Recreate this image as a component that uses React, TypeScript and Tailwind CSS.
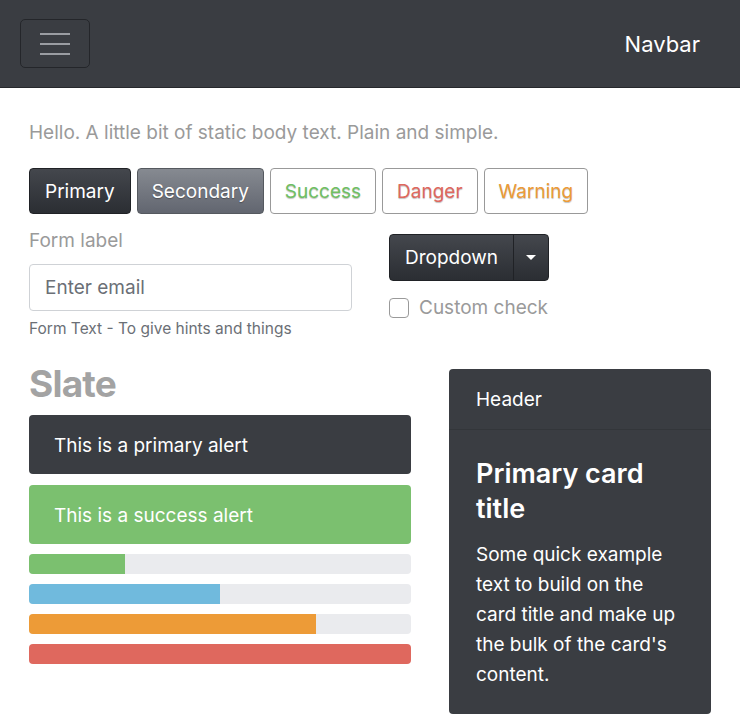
import React from "react";

const bars = [
  { pct: 25, color: "bg-[#7bc06f]" },
  { pct: 50, color: "bg-[#70badd]" },
  { pct: 75, color: "bg-[#ed9b37]" },
  { pct: 100, color: "bg-[#df685e]" },
];

export default function App() {
  return (
    <div className="min-h-[720px] bg-white font-['Inter','Liberation_Sans',sans-serif] text-[19px]">
      {/* Navbar */}
      <nav className="h-[88px] bg-[#3a3d42] border-b border-[#26282c] flex items-center justify-between pl-5 pr-10">
        <button className="w-[70px] h-[49px] rounded-[5px] border border-[#24262a] flex flex-col items-center justify-center gap-[8px]">
          <span className="block w-[30px] h-[2px] bg-[#9a9da2]" />
          <span className="block w-[30px] h-[2px] bg-[#9a9da2]" />
          <span className="block w-[30px] h-[2px] bg-[#9a9da2]" />
        </button>
        <span className="text-white text-[22px] pt-[2px]">Navbar</span>
      </nav>

      <div className="px-[29px]">
        <p className="mt-[34px] text-[#9a9a9a] leading-[22px]">
          Hello. A little bit of static body text. Plain and simple.
        </p>

        {/* Buttons */}
        <div className="mt-[24px] flex gap-[6px]">
          <button className="h-[46px] pt-[2px] px-[15px] rounded-[4px] border border-[#202226] bg-gradient-to-b from-[#44474d] to-[#2b2e33] text-white">
            Primary
          </button>
          <button className="h-[46px] pt-[2px] px-[14px] rounded-[4px] border border-[#55595f] bg-gradient-to-b from-[#868a91] to-[#626670] text-white [text-shadow:0_1px_1px_rgba(0,0,0,0.3)]">
            Secondary
          </button>
          <button className="h-[46px] pt-[2px] px-[14px] rounded-[4px] border border-[#999] bg-white text-[#6fbf62] [text-shadow:0_1px_1px_rgba(0,0,0,0.25)]">
            Success
          </button>
          <button className="h-[46px] pt-[2px] px-[14px] rounded-[4px] border border-[#999] bg-white text-[#df685e] [text-shadow:0_1px_1px_rgba(0,0,0,0.25)]">
            Danger
          </button>
          <button className="h-[46px] pt-[2px] px-[14px] rounded-[4px] border border-[#999] bg-white text-[#ed9b37] [text-shadow:0_1px_1px_rgba(0,0,0,0.25)]">
            Warning
          </button>
        </div>

        {/* Form row */}
        <div className="mt-[14px] grid grid-cols-[323px_1fr] gap-[37px]">
          <div>
            <label className="block text-[#9a9a9a] leading-[22px] mt-[2px]">Form label</label>
            <input
              placeholder="Enter email"
              className="mt-[12px] w-full h-[47px] rounded-[4px] border border-[#cfd2d6] px-[15px] text-[19px] placeholder:text-[#6b6f76] outline-none"
            />
            <p className="mt-[6px] text-[15.5px] text-[#6b6f76]">Form Text - To give hints and things</p>
          </div>
          <div className="pt-[6px]">
            <div className="inline-flex h-[47px] rounded-[4px] border border-[#202226] bg-gradient-to-b from-[#44474d] to-[#2b2e33] text-white">
              <span className="px-[15px] pt-[2px] flex items-center">Dropdown</span>
              <span className="w-[35px] border-l border-[#202226] flex items-center justify-center">
                <span className="block w-0 h-0 border-l-[5px] border-r-[5px] border-t-[5px] border-l-transparent border-r-transparent border-t-white" />
              </span>
            </div>
            <div className="mt-[13px] flex items-center gap-[10px]">
              <span className="block w-[20px] h-[20px] rounded-[4px] border border-[#9a9a9a] bg-white" />
              <span className="text-[#9a9a9a]">Custom check</span>
            </div>
          </div>
        </div>

        {/* Lower grid */}
        <div className="mt-[29px] grid grid-cols-[382px_262px] gap-[38px]">
          <div>
            <h1 className="text-[37px] font-bold text-[#a3a3a3] leading-[44px] -mt-[7px] tracking-[-0.8px]">Slate</h1>
            <div className="mt-[9px] h-[59px] pt-[2px] rounded-[4px] bg-[#3a3d42] text-white flex items-center px-[25px]">
              This is a primary alert
            </div>
            <div className="mt-[11px] h-[59px] pt-[2px] rounded-[4px] bg-[#7bc06f] text-white flex items-center px-[25px]">
              This is a success alert
            </div>
            <div className="mt-[10px] flex flex-col gap-[10px]">
              {bars.map((b, i) => (
                <div key={i} className="h-[20px] rounded-[4px] bg-[#eaebee] overflow-hidden flex">
                  <div className={b.color} style={{ width: `${b.pct}%` }} />
                </div>
              ))}
            </div>
          </div>

          <div className="rounded-[4px] bg-[#3a3d42] text-white overflow-hidden self-start">
            <div className="h-[61px] pt-[2px] flex items-center px-[27px] border-b border-[#33363a]">Header</div>
            <div className="px-[27px] pt-[26px] pb-[24px]">
              <h2 className="text-[27px] font-semibold leading-[35px]">Primary card title</h2>
              <p className="mt-[14px] leading-[30px]">
                Some quick example text to build on the card title and make up the bulk of the card's content.
              </p>
            </div>
          </div>
        </div>
      </div>
    </div>
  );
}
